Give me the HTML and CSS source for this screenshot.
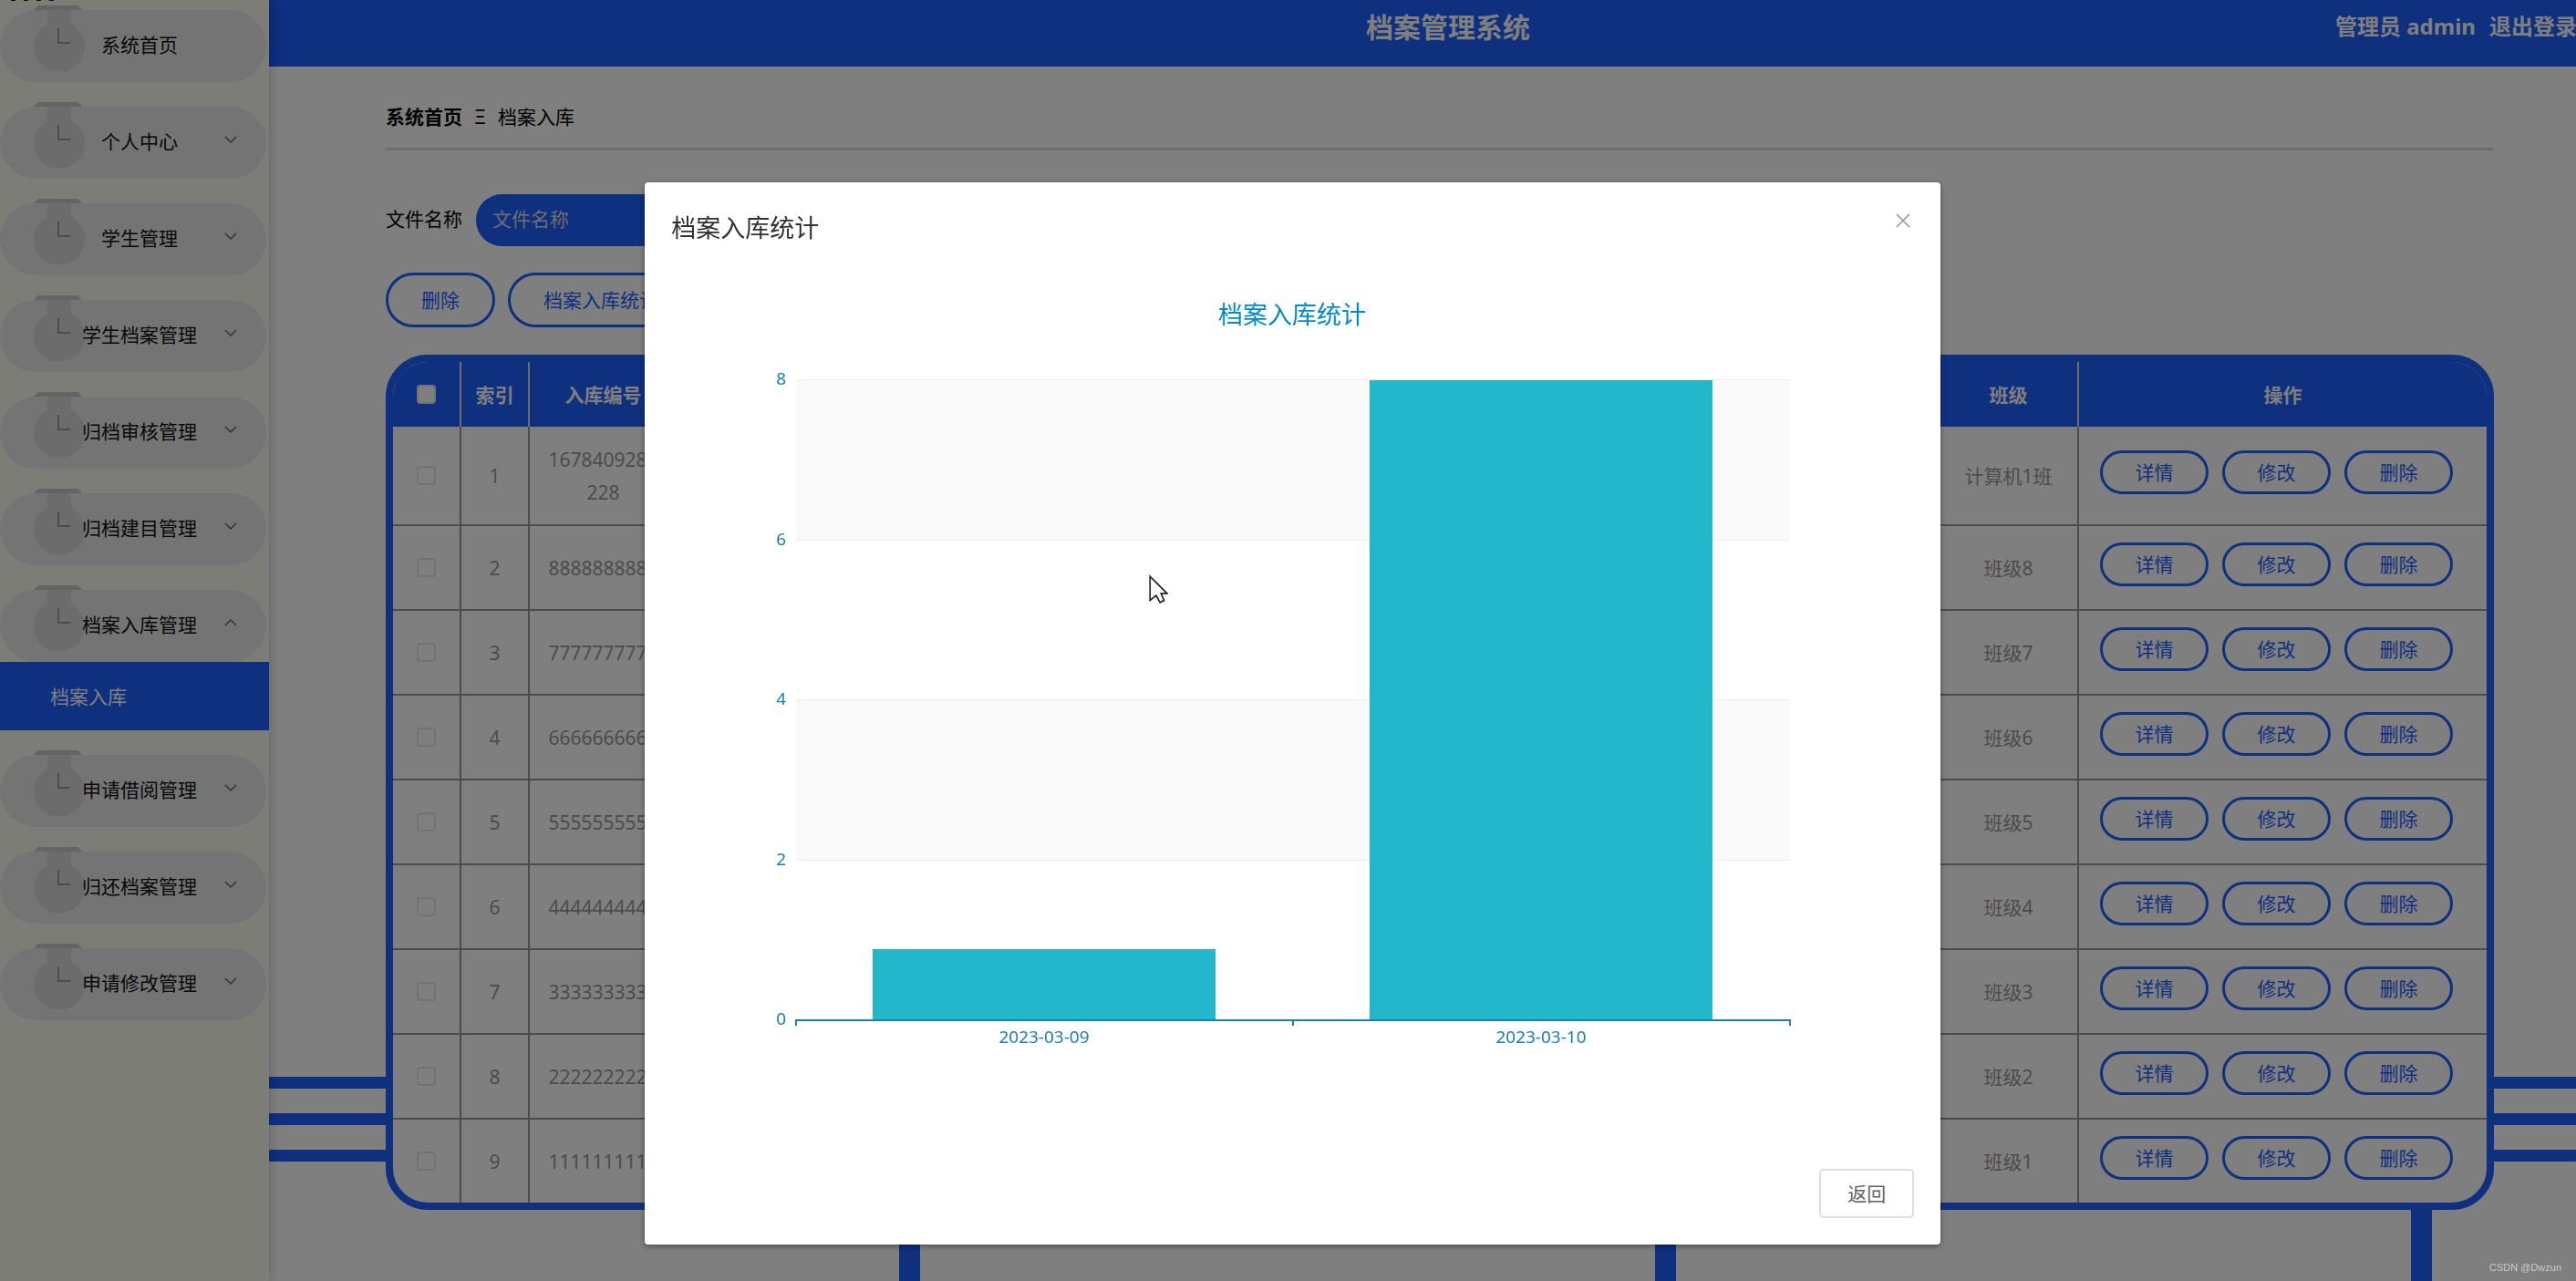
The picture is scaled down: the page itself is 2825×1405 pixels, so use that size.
FILE: index.html
```html
<!DOCTYPE html>
<html lang="zh-CN">
<head>
  <meta charset="UTF-8">
  <title>档案管理系统</title>
  <link rel="stylesheet" href="styles.css">
</head>
<body>
  <svg class="sprite" aria-hidden="true">
    <symbol id="icon-medal" viewBox="0 0 60 72">
      <path d="M7 0h43l5 5h-12v15a28 28 0 1 1-26 0V5H2z" fill="#d8d8d8"/>
      <path d="M7 0h43l5 5H2z" fill="#c8c8c8"/>
      <path d="M29 25v16h13" fill="none" stroke="#999" stroke-width="2"/>
    </symbol>
    <symbol id="icon-arrow" viewBox="0 0 14 8">
      <path d="M1 1l6 6 6-6" fill="none" stroke="#666" stroke-width="1.5"/>
    </symbol>
  </svg>

  <div class="layout">
    <aside class="sidebar">
      <ul class="menu">
        <li><a class="menu-item" href="#"><svg class="medal"><use href="#icon-medal"/></svg>系统首页</a></li>
        <li><a class="menu-item" href="#"><svg class="medal"><use href="#icon-medal"/></svg>个人中心<svg class="arrow"><use href="#icon-arrow"/></svg></a></li>
        <li><a class="menu-item" href="#"><svg class="medal"><use href="#icon-medal"/></svg>学生管理<svg class="arrow"><use href="#icon-arrow"/></svg></a></li>
        <li><a class="menu-item" href="#"><svg class="medal"><use href="#icon-medal"/></svg>学生档案管理<svg class="arrow"><use href="#icon-arrow"/></svg></a></li>
        <li><a class="menu-item" href="#"><svg class="medal"><use href="#icon-medal"/></svg>归档审核管理<svg class="arrow"><use href="#icon-arrow"/></svg></a></li>
        <li><a class="menu-item" href="#"><svg class="medal"><use href="#icon-medal"/></svg>归档建目管理<svg class="arrow"><use href="#icon-arrow"/></svg></a></li>
        <li>
          <a class="menu-item open" href="#"><svg class="medal"><use href="#icon-medal"/></svg>档案入库管理<svg class="arrow"><use href="#icon-arrow"/></svg></a>
          <a class="submenu-item" href="#">档案入库</a>
        </li>
        <li><a class="menu-item" href="#"><svg class="medal"><use href="#icon-medal"/></svg>申请借阅管理<svg class="arrow"><use href="#icon-arrow"/></svg></a></li>
        <li><a class="menu-item" href="#"><svg class="medal"><use href="#icon-medal"/></svg>归还档案管理<svg class="arrow"><use href="#icon-arrow"/></svg></a></li>
        <li><a class="menu-item" href="#"><svg class="medal"><use href="#icon-medal"/></svg>申请修改管理<svg class="arrow"><use href="#icon-arrow"/></svg></a></li>
      </ul>
    </aside>

    <div class="main">
      <header class="header">
        <h1>档案管理系统</h1>
        <div class="user">
          <span>管理员 admin</span>
          <a href="#">退出登录</a>
        </div>
      </header>

      <div class="content">
        <nav class="breadcrumb">
          <a href="#">系统首页</a>
          <span>Ξ</span>
          <span>档案入库</span>
        </nav>

        <form class="search">
          <label for="file-name">文件名称</label>
          <input type="text" id="file-name" placeholder="文件名称">
        </form>

        <div class="toolbar">
          <button type="button">删除</button>
          <button type="button">档案入库统计</button>
        </div>

        <div class="table-box">
          <table>
            <colgroup>
              <col class="col-check">
              <col class="col-index">
              <col class="col-code">
              <col>
              <col class="col-class">
              <col class="col-actions">
            </colgroup>
            <thead>
              <tr>
                <th><input type="checkbox" aria-label="全选"></th>
                <th>索引</th>
                <th>入库编号</th>
                <th></th>
                <th>班级</th>
                <th>操作</th>
              </tr>
            </thead>
            <tbody id="rows"></tbody>
          </table>
        </div>
        <div class="legs"><i></i><i></i><i></i></div>
      </div>
    </div>
  </div>

  <div class="overlay">
    <div class="dialog" role="dialog" aria-labelledby="dialog-title">
      <div class="dialog-header">
        <h2 id="dialog-title">档案入库统计</h2>
        <button type="button" class="close" aria-label="关闭">
          <svg viewBox="0 0 16 16"><path d="M1 1l14 14M15 1L1 15" stroke="#909399" stroke-width="1.5"/></svg>
        </button>
      </div>
      <svg class="chart" viewBox="0 0 1363 960" role="img" aria-label="档案入库统计">
        <text class="chart-title" x="681" y="69">档案入库统计</text>
        <!-- split areas -->
        <path d="M137 130h1090v176H137zM137 482h1090v175H137z" fill="#fafafa"/>
        <path d="M137 130.500h1090M137 306.500h1090M137 481.500h1090M137 657.500h1090" stroke="#eee"/>
        <!-- bars -->
        <path d="M221 755h376v78H221zM766 131h376v702H766z" fill="#23b7cb"/>
        <!-- axis -->
        <path d="M137 839v-6h1090v6M682 833v6" fill="none" stroke="#1a7fb0" stroke-width="2"/>
        <g class="y-labels">
          <text x="126" y="136">8</text>
          <text x="126" y="312">6</text>
          <text x="126" y="487">4</text>
          <text x="126" y="663">2</text>
          <text x="126" y="838">0</text>
        </g>
        <g class="x-labels">
          <text x="409" y="858">2023-03-09</text>
          <text x="954" y="858">2023-03-10</text>
        </g>
      </svg>
      <div class="dialog-footer">
        <button type="button">返回</button>
      </div>
    </div>
  </div>

  <svg class="cursor" viewBox="0 0 20 30"><path d="M2 2v24l6-5 4 7 4-2-3-7h6z" fill="#fff" stroke="#222" stroke-width="1.5"/></svg>
  <div class="watermark">CSDN @Dwzun</div>

  <script src="script.js"></script>
</body>
</html>
```
FILE: styles.css
```css
* {
  box-sizing: border-box;
}
body {
  margin: 0;
  font-family: "Noto Sans", "Noto Sans CJK SC", sans-serif;
  font-size: 21px;
  line-height: 30px;
  color: #000;
  background: #fff;
  overflow: hidden;
}
a {
  color: inherit;
  text-decoration: none;
}
button, input {
  font: inherit;
}
.sprite {
  display: none;
}
.layout {
  display: flex;
  height: 100vh;
}

/* sidebar */
.sidebar {
  flex: none;
  width: 295px;
  /* lower edge of the row that is scrolled out at the top */
  background: repeating-linear-gradient(90deg, #222 0 5px, transparent 5px 14px) 12px 0 / 48px 1px no-repeat, #fafaee;
  box-shadow: 2px 0 12px rgba(0, 0, 0, 0.2);
  z-index: 1;
}
.menu {
  list-style: none;
  margin: 0;
  padding: 11px 0 0;
}
.menu li {
  margin-bottom: 27px;
}
.menu-item {
  position: relative;
  z-index: 0;
  display: flex;
  align-items: center;
  justify-content: center;
  width: 292px;
  height: 79px;
  padding: 0 0 3px 14px;
  border-radius: 40px;
  background: #e8e8e8;
  color: #111;
}
.medal {
  position: absolute;
  left: 35px;
  top: -5px;
  width: 60px;
  height: 72px;
  z-index: -1;
}
.arrow {
  position: absolute;
  right: 32px;
  top: 32px;
  width: 14px;
  height: 8px;
}
.open .arrow {
  transform: rotate(180deg);
}
.submenu-item {
  display: flex;
  align-items: center;
  position: relative;
  height: 75px;
  padding-left: 55px;
  background: #1e5eff;
  color: #fff;
}

/* page */
.main {
  flex: 1;
  min-width: 0;
  display: flex;
  flex-direction: column;
  background:
    linear-gradient(#1e5eff, #1e5eff) 0 calc(100% - 211px) / 100% 13px no-repeat,
    linear-gradient(#1e5eff, #1e5eff) 0 calc(100% - 171px) / 100% 13px no-repeat,
    linear-gradient(#1e5eff, #1e5eff) 0 calc(100% - 131px) / 100% 13px no-repeat;
}
.header {
  flex: none;
  display: flex;
  height: 73px;
  padding: 10px 0 0 320px;
  background: #1e5eff;
  color: #fff;
  font-weight: bold;
  line-height: 40px;
}
.header h1 {
  flex: 1;
  margin: 0;
  font-size: 30px;
  text-align: center;
}
.user {
  display: flex;
  gap: 15px;
  width: 264px;
  font-size: 24px;
  line-height: 38px;
  white-space: nowrap;
}
.content {
  flex: 1;
  display: flex;
  flex-direction: column;
  padding: 40px 90px 0 128px;
}
.breadcrumb {
  display: flex;
  gap: 13px;
  padding-bottom: 19px;
  border-bottom: 3px solid #dcdcdc;
}
.breadcrumb a {
  font-weight: bold;
}
.search {
  display: flex;
  align-items: center;
  gap: 15px;
  margin-top: 48px;
}
.search label {
  padding-bottom: 3px;
}
.search input {
  width: 320px;
  height: 57px;
  padding: 0 18px 3px;
  border: 0;
  border-radius: 29px;
  background: #1e5eff;
  color: #fff;
}
.search input::placeholder {
  color: #ddd;
}
.toolbar {
  display: flex;
  gap: 14px;
  margin: 29px 0 30px;
}
.toolbar button {
  height: 60px;
  padding: 0 36px;
}
.toolbar button, .actions button {
  border: 3px solid #1e5eff;
  border-radius: 30px;
  background: #fff;
  color: #1e5eff;
}

/* table */
.table-box {
  border: 8px solid #1e5eff;
  border-radius: 46px;
  background: #fff;
  overflow: hidden;
}
table {
  width: 100%;
  table-layout: fixed;
  border-collapse: separate;
  border-spacing: 0;
  text-align: center;
}
.col-check, .col-index {
  width: 75px;
}
.col-code {
  width: 163px;
}
.col-class {
  width: 153px;
}
.col-actions {
  width: 447px;
}
th, td {
  padding: 0 10px;
  border-right: 2px solid #999;
}
th:last-child, td:last-child {
  border-right: 0;
}
th {
  height: 71px;
  background: #1e5eff;
  border-right-color: #ddd;
  color: #fff;
}
td {
  height: 93px;
  border-bottom: 2px solid #999;
  color: #999;
  line-height: 36px;
  overflow-wrap: anywhere;
}
td:nth-child(3) {
  padding: 0 18px;
}
tbody tr:first-child td {
  height: 109px;
}
tbody tr:last-child td {
  height: 91px;
  border-bottom: 0;
}
input[type="checkbox"] {
  appearance: none;
  display: block;
  width: 21px;
  height: 21px;
  margin: 0 auto;
  border: 2px solid #e4e4e4;
  border-radius: 4px;
  background: #fff;
}
.actions {
  display: flex;
  gap: 15px;
  padding: 0 0 7px 13px;
}
.actions button {
  width: 119px;
  height: 48px;
  line-height: 30px;
}
.legs {
  flex: 1;
  display: flex;
  justify-content: space-between;
  padding: 0 68px 0 563px;
}
.legs i {
  width: 23px;
  background: #1e5eff;
}

/* dialog */
.overlay {
  position: fixed;
  inset: 0;
  z-index: 10;
  background: rgba(0, 0, 0, 0.5);
}
.dialog {
  width: 50.3vw;
  margin: 200px 0 0 calc(25vw + 1px);
  padding: 30px 29px 29px;
  border-radius: 4px;
  background: #fff;
  box-shadow: 0 2px 6px rgba(0, 0, 0, 0.4);
}
.dialog-header {
  display: flex;
  justify-content: space-between;
  align-items: flex-start;
}
.dialog h2 {
  margin: 0;
  font-size: 27px;
  font-weight: normal;
  line-height: 40px;
  color: #303133;
}
.close {
  width: 24px;
  height: 24px;
  padding: 4px;
  border: 0;
  background: none;
}
.close svg {
  display: block;
}
.chart {
  display: block;
  width: 100%;
  margin-top: 16px;
}
.chart text {
  font-size: 19px;
  fill: #1a7fb0;
}
.chart .chart-title {
  font-size: 27px;
  text-anchor: middle;
  fill: #008acd;
}
.y-labels {
  text-anchor: end;
}
.x-labels {
  text-anchor: middle;
}
.dialog-footer {
  display: flex;
  justify-content: flex-end;
  margin-top: 36px;
}
.dialog-footer button {
  width: 104px;
  height: 54px;
  border: 2px solid #dcdfe6;
  border-radius: 5px;
  background: #fff;
  color: #606266;
}
.cursor {
  position: fixed;
  left: 1259px;
  top: 630px;
  width: 22px;
  height: 33px;
  z-index: 11;
}
.watermark {
  position: fixed;
  right: 16px;
  bottom: 5px;
  z-index: 11;
  font-family: "Liberation Sans", sans-serif;
  font-size: 11px;
  line-height: 20px;
  color: #ccc;
}
```
FILE: script.js
```js
var rows = [
  ['1678409280228', '计算机1班'],
  ['8888888888', '班级8'],
  ['7777777777', '班级7'],
  ['6666666666', '班级6'],
  ['5555555555', '班级5'],
  ['4444444444', '班级4'],
  ['3333333333', '班级3'],
  ['2222222222', '班级2'],
  ['1111111111', '班级1']
];

document.getElementById('rows').innerHTML = rows.map(function (row, i) {
  return '<tr>' +
    '<td><input type="checkbox" aria-label="选择' + (i + 1) + '"></td>' +
    '<td>' + (i + 1) + '</td>' +
    '<td>' + row[0] + '</td>' +
    '<td></td>' +
    '<td>' + row[1] + '</td>' +
    '<td><div class="actions">' +
      '<button type="button">详情</button>' +
      '<button type="button">修改</button>' +
      '<button type="button">删除</button>' +
    '</div></td>' +
  '</tr>';
}).join('');
```
